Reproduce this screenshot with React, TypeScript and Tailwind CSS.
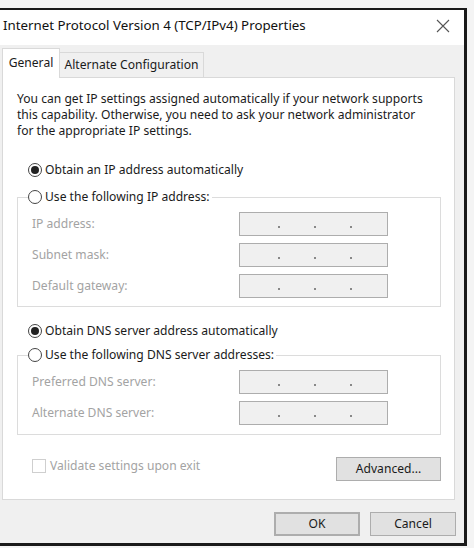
import type { ReactNode } from "react";

const font = { fontFamily: '"Noto Sans", "Open Sans", sans-serif' };

export default function App() {
  return (
    <div
      className="h-[548px] w-[474px] overflow-hidden bg-[#f4f4f4] pt-[8px] text-[12.1px] text-[#1a1a1a]"
      style={font}
    >
      <div className="flex h-[538px] w-[467px] flex-col border-t-2 border-r-[3px] border-b-[3px] border-[#1a1a1a] bg-[#f0f0f0]">
        <div className="flex h-[35px] items-center justify-between bg-white pb-[4px] pl-[3px] pr-[14px]">
          <span className="text-[13.3px] leading-none text-[#111]">
            Internet Protocol Version 4 (TCP/IPv4) Properties
          </span>
          <svg width="14" height="14" viewBox="0 0 14 14" className="text-[#555]">
            <path d="M1 1L13 13M13 1L1 13" stroke="currentColor" strokeWidth="1.1" />
          </svg>
        </div>

        <div className="flex h-[32px] items-end pl-[2px]">
          <div className="relative z-10 -mb-px flex h-[30px] w-[58px] items-center justify-center border border-b-0 border-[#d9d9d9] bg-white">
            General
          </div>
          <div className="flex h-[25px] w-[144px] items-center justify-center border border-b-0 border-l-0 border-[#d9d9d9] bg-[#f0f0f0]">
            Alternate Configuration
          </div>
        </div>

        <div className="ml-[2px] flex h-[423px] w-[453px] flex-col border border-[#d9d9d9] bg-white pt-[13px] pl-[14px]">
          <p className="w-[430px] leading-[16px]">
            You can get IP settings assigned automatically if your network supports
            <br />
            this capability. Otherwise, you need to ask your network administrator
            <br />
            for the appropriate IP settings.
          </p>

          <div className="mt-[22px] ml-[11px]">
            <Radio checked label="Obtain an IP address automatically" />
          </div>

          <fieldset className="mt-[9px] w-[424px] border border-[#dcdcdc] pb-[8px]">
            <legend className="ml-[10px] pr-[2px]">
              <Radio label="Use the following IP address:" />
            </legend>
            <div className="mt-[6px] flex flex-col gap-[7px]">
              <AddressRow label="IP address:" />
              <AddressRow label="Subnet mask:" />
              <AddressRow label="Default gateway:" />
            </div>
          </fieldset>

          <div className="mt-[15px] ml-[11px]">
            <Radio checked label="Obtain DNS server address automatically" />
          </div>

          <fieldset className="mt-[6px] w-[424px] border border-[#dcdcdc] pb-[9px]">
            <legend className="ml-[10px] pr-[2px]">
              <Radio label="Use the following DNS server addresses:" />
            </legend>
            <div className="mt-[6px] flex flex-col gap-[7px]">
              <AddressRow label="Preferred DNS server:" />
              <AddressRow label="Alternate DNS server:" />
            </div>
          </fieldset>

          <div className="mt-[22px] flex w-[424px] items-start justify-between">
            <div className="ml-[15px] flex items-center gap-[4px] text-[#a3a3a3]">
              <span className="h-[14px] w-[14px] border border-[#cfcfcf] bg-white" />
              Validate settings upon exit
            </div>
            <Button className="w-[105px]">Advanced...</Button>
          </div>
        </div>

        <div className="mt-[12px] flex justify-end gap-[10px] pr-[8px]">
          <Button className="w-[86px] border-2 border-[#2a7fd4]">OK</Button>
          <Button className="w-[86px]">Cancel</Button>
        </div>
      </div>
    </div>
  );
}

function Radio({ label, checked }: { label: string; checked?: boolean }) {
  return (
    <div className="flex h-[18px] items-center gap-[3px]">
      <span className="flex h-[14px] w-[14px] items-center justify-center rounded-full border border-[#444] bg-white">
        {checked && <span className="h-[8px] w-[8px] rounded-full bg-[#222]" />}
      </span>
      <span>{label}</span>
    </div>
  );
}

function AddressRow({ label }: { label: string }) {
  return (
    <div className="flex items-center pl-[14px]">
      <span className="w-[207px] text-[#a3a3a3]">{label}</span>
      <div className="relative h-[24px] w-[149px] border border-[#adadad] bg-[#f0f0f0]">
        <span className="absolute top-[13px] left-[38px] h-[2px] w-[2px] bg-[#888]" />
        <span className="absolute top-[13px] left-[74px] h-[2px] w-[2px] bg-[#888]" />
        <span className="absolute top-[13px] left-[110px] h-[2px] w-[2px] bg-[#888]" />
      </div>
    </div>
  );
}

function Button({ children, className }: { children: ReactNode; className?: string }) {
  return (
    <div
      className={`flex h-[24px] items-center justify-center border border-[#adadad] bg-[#e1e1e1] ${className ?? ""}`}
    >
      {children}
    </div>
  );
}
